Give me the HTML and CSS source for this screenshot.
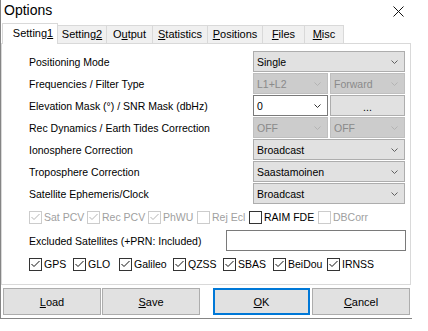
FILE: index.html
```html
<!DOCTYPE html>
<html lang="en">

<head>
    <meta charset="UTF-8">
    <meta name="viewport" content="width=device-width, initial-scale=1.0">
    <title>Options</title>
    <link rel="stylesheet" href="styles.css">
</head>

<body>
    <div class="window">
        <div class="titlebar">
            <span class="title">Options</span>
            <svg class="close" width="11" height="11" viewBox="0 0 11 11">
                <path d="M0.5 0.5 L10.5 10.5 M10.5 0.5 L0.5 10.5" stroke="#111" stroke-width="1" fill="none" />
            </svg>
        </div>

        <div class="tabs">
            <div class="tab active t-s1">Setting<u>1</u></div>
            <div class="tab t-s2">Setting<u>2</u></div>
            <div class="tab t-out">O<u>u</u>tput</div>
            <div class="tab t-stat"><u>S</u>tatistics</div>
            <div class="tab t-pos"><u>P</u>ositions</div>
            <div class="tab t-files"><u>F</u>iles</div>
            <div class="tab t-misc"><u>M</u>isc</div>
        </div>

        <div class="pane">
            <div class="row">
                <span class="label">Positioning Mode</span>
                <div class="combo full"><span>Single</span><svg width="7" height="4" viewBox="0 0 7 4"><path d="M0.5 0.5 L3.5 3.5 L6.5 0.5" /></svg></div>
            </div>
            <div class="row">
                <span class="label">Frequencies / Filter Type</span>
                <div class="pair">
                    <div class="combo disabled"><span>L1+L2</span><svg width="7" height="4" viewBox="0 0 7 4"><path d="M0.5 0.5 L3.5 3.5 L6.5 0.5" /></svg></div>
                    <div class="combo disabled"><span>Forward</span><svg width="7" height="4" viewBox="0 0 7 4"><path d="M0.5 0.5 L3.5 3.5 L6.5 0.5" /></svg></div>
                </div>
            </div>
            <div class="row">
                <span class="label">Elevation Mask (&deg;) / SNR Mask (dbHz)</span>
                <div class="pair">
                    <div class="combo edit"><span>0</span><svg width="7" height="4" viewBox="0 0 7 4"><path d="M0.5 0.5 L3.5 3.5 L6.5 0.5" /></svg></div>
                    <div class="btn small">...</div>
                </div>
            </div>
            <div class="row">
                <span class="label">Rec Dynamics / Earth Tides Correction</span>
                <div class="pair">
                    <div class="combo disabled"><span>OFF</span><svg width="7" height="4" viewBox="0 0 7 4"><path d="M0.5 0.5 L3.5 3.5 L6.5 0.5" /></svg></div>
                    <div class="combo disabled"><span>OFF</span><svg width="7" height="4" viewBox="0 0 7 4"><path d="M0.5 0.5 L3.5 3.5 L6.5 0.5" /></svg></div>
                </div>
            </div>
            <div class="row">
                <span class="label">Ionosphere Correction</span>
                <div class="combo full"><span>Broadcast</span><svg width="7" height="4" viewBox="0 0 7 4"><path d="M0.5 0.5 L3.5 3.5 L6.5 0.5" /></svg></div>
            </div>
            <div class="row">
                <span class="label">Troposphere Correction</span>
                <div class="combo full"><span>Saastamoinen</span><svg width="7" height="4" viewBox="0 0 7 4"><path d="M0.5 0.5 L3.5 3.5 L6.5 0.5" /></svg></div>
            </div>
            <div class="row">
                <span class="label">Satellite Ephemeris/Clock</span>
                <div class="combo full"><span>Broadcast</span><svg width="7" height="4" viewBox="0 0 7 4"><path d="M0.5 0.5 L3.5 3.5 L6.5 0.5" /></svg></div>
            </div>

            <div class="checks">
                <label class="chk off w58"><span class="box"><svg width="11" height="11" viewBox="0 0 11 11"><path d="M1.5 5 L4 7.5 L9.5 2" /></svg></span>Sat PCV</label>
                <label class="chk off w61"><span class="box"><svg width="11" height="11" viewBox="0 0 11 11"><path d="M1.5 5 L4 7.5 L9.5 2" /></svg></span>Rec PCV</label>
                <label class="chk off w49"><span class="box"><svg width="11" height="11" viewBox="0 0 11 11"><path d="M1.5 5 L4 7.5 L9.5 2" /></svg></span>PhWU</label>
                <label class="chk off w52"><span class="box"></span>Rej Ecl</label>
                <label class="chk w69"><span class="box"></span>RAIM FDE</label>
                <label class="chk off"><span class="box"></span>DBCorr</label>
            </div>

            <div class="row">
                <span class="label auto">Excluded Satellites (+PRN: Included)</span>
                <div class="textbox"></div>
            </div>

            <div class="checks">
                <label class="chk w44"><span class="box"><svg width="11" height="11" viewBox="0 0 11 11"><path d="M1.5 5 L4 7.5 L9.5 2" /></svg></span>GPS</label>
                <label class="chk w46"><span class="box"><svg width="11" height="11" viewBox="0 0 11 11"><path d="M1.5 5 L4 7.5 L9.5 2" /></svg></span>GLO</label>
                <label class="chk w54"><span class="box"><svg width="11" height="11" viewBox="0 0 11 11"><path d="M1.5 5 L4 7.5 L9.5 2" /></svg></span>Galileo</label>
                <label class="chk w50"><span class="box"><svg width="11" height="11" viewBox="0 0 11 11"><path d="M1.5 5 L4 7.5 L9.5 2" /></svg></span>QZSS</label>
                <label class="chk w50"><span class="box"><svg width="11" height="11" viewBox="0 0 11 11"><path d="M1.5 5 L4 7.5 L9.5 2" /></svg></span>SBAS</label>
                <label class="chk w54"><span class="box"><svg width="11" height="11" viewBox="0 0 11 11"><path d="M1.5 5 L4 7.5 L9.5 2" /></svg></span>BeiDou</label>
                <label class="chk"><span class="box"><svg width="11" height="11" viewBox="0 0 11 11"><path d="M1.5 5 L4 7.5 L9.5 2" /></svg></span>IRNSS</label>
            </div>
        </div>

        <div class="buttons">
            <div class="btn big"><u>L</u>oad</div>
            <div class="btn big save"><u>S</u>ave</div>
            <div class="btn big ok"><u>O</u>K</div>
            <div class="btn big cancel"><u>C</u>ancel</div>
        </div>
    </div>
</body>

</html>
```

FILE: styles.css
```css
* {
    margin: 0;
    padding: 0;
    box-sizing: border-box;
}

body {
    background-color: #ffffff;
    font-family: "Liberation Sans", Arial, sans-serif;
    font-size: 11px;
    color: #000000;
}

.window {
    width: 412px;
    height: 319px;
    border-left: 1px solid #858585;
    border-bottom: 1px solid #858585;
}

/* title bar */
.titlebar {
    height: 23px;
    display: flex;
    justify-content: space-between;
    align-items: center;
    padding: 0 8px 3px 3px;
}

.title {
    font-size: 14px;
}

.close {
    display: block;
    margin-top: 2px;
}

/* tabs */
.tabs {
    display: flex;
    align-items: flex-end;
    height: 20px;
    padding-left: 1px;
}

.tab {
    height: 18px;
    line-height: 17px;
    text-align: center;
    background-color: #f0f0f0;
    border-top: 1px solid #d9d9d9;
    border-right: 1px solid #d9d9d9;
}

.tab.active {
    position: relative;
    z-index: 1;
    height: 21px;
    line-height: 18px;
    margin-bottom: -1px;
    padding-left: 6px;
    background-color: #ffffff;
    border-left: 1px solid #d9d9d9;
}

.t-s1 { width: 56px; }
.t-s2 { width: 49px; }
.t-out { width: 46px; }
.t-stat { width: 55px; }
.t-pos { width: 55px; }
.t-files { width: 42px; }
.t-misc { width: 39px; }

/* tab page */
.pane {
    width: 410px;
    height: 242px;
    border: 1px solid #d9d9d9;
    background-color: #ffffff;
    padding: 7px 5px 0 27px;
    font-size: 10.5px;
}

.row {
    display: flex;
    align-items: center;
    height: 21px;
    margin-bottom: 1px;
}

.label {
    width: 224px;
    flex-shrink: 0;
}

.label.auto {
    width: auto;
}

.pair {
    width: 152px;
    display: grid;
    grid-template-columns: 75px 75px;
    gap: 2px;
}

.combo {
    height: 21px;
    display: flex;
    justify-content: space-between;
    align-items: center;
    padding: 0 6px 0 3px;
    background-color: #e1e1e1;
    border: 1px solid #adadad;
}

.combo.full {
    width: 152px;
}

.combo svg path {
    fill: none;
    stroke: #606060;
    stroke-width: 1;
}

.combo.disabled {
    background-color: #cccccc;
    border-color: #bfbfbf;
    color: #8a8a8a;
}

.combo.disabled svg path {
    stroke: #b3b3b3;
}

.combo.edit {
    background-color: #ffffff;
    border-color: #7a7a7a;
}

.combo.edit svg path {
    stroke: #333333;
}

.textbox {
    width: 180px;
    height: 21px;
    flex-shrink: 0;
    margin-left: auto;
    margin-right: -1px;
    border: 1px solid #7a7a7a;
    background-color: #ffffff;
}

/* check boxes */
.checks {
    display: flex;
    align-items: center;
    height: 26px;
}

.row + .checks {
    margin-top: -1px;
}

.chk {
    display: flex;
    align-items: center;
    gap: 2px;
    flex-shrink: 0;
}

.chk .box {
    width: 13px;
    height: 13px;
    border: 1px solid #333333;
    background-color: #ffffff;
}

.chk .box svg {
    display: block;
}

.chk .box path {
    fill: none;
    stroke: #111111;
    stroke-width: 1;
}

.chk.off {
    color: #a0a0a0;
}

.chk.off .box {
    border-color: #cccccc;
}

.chk.off .box path {
    stroke: #b5b5b5;
}

.w44 { width: 44px; }
.w46 { width: 46px; }
.w49 { width: 49px; }
.w50 { width: 50px; }
.w52 { width: 52px; }
.w54 { width: 54px; }
.w58 { width: 58px; }
.w61 { width: 61px; }
.w69 { width: 69px; }

/* buttons */
.btn {
    display: flex;
    justify-content: center;
    align-items: center;
    background-color: #e1e1e1;
    border: 1px solid #adadad;
}

.btn.small {
    height: 21px;
    padding-top: 2px;
}

.buttons {
    display: flex;
    padding: 3px 0 0 2px;
}

.btn.big {
    width: 98px;
    height: 27px;
}

.btn.save {
    margin-left: 1px;
}

.btn.ok {
    width: 97px;
    margin-left: 13px;
    border: 2px solid #0078d7;
}

.btn.cancel {
    margin-left: 2px;
}
```
